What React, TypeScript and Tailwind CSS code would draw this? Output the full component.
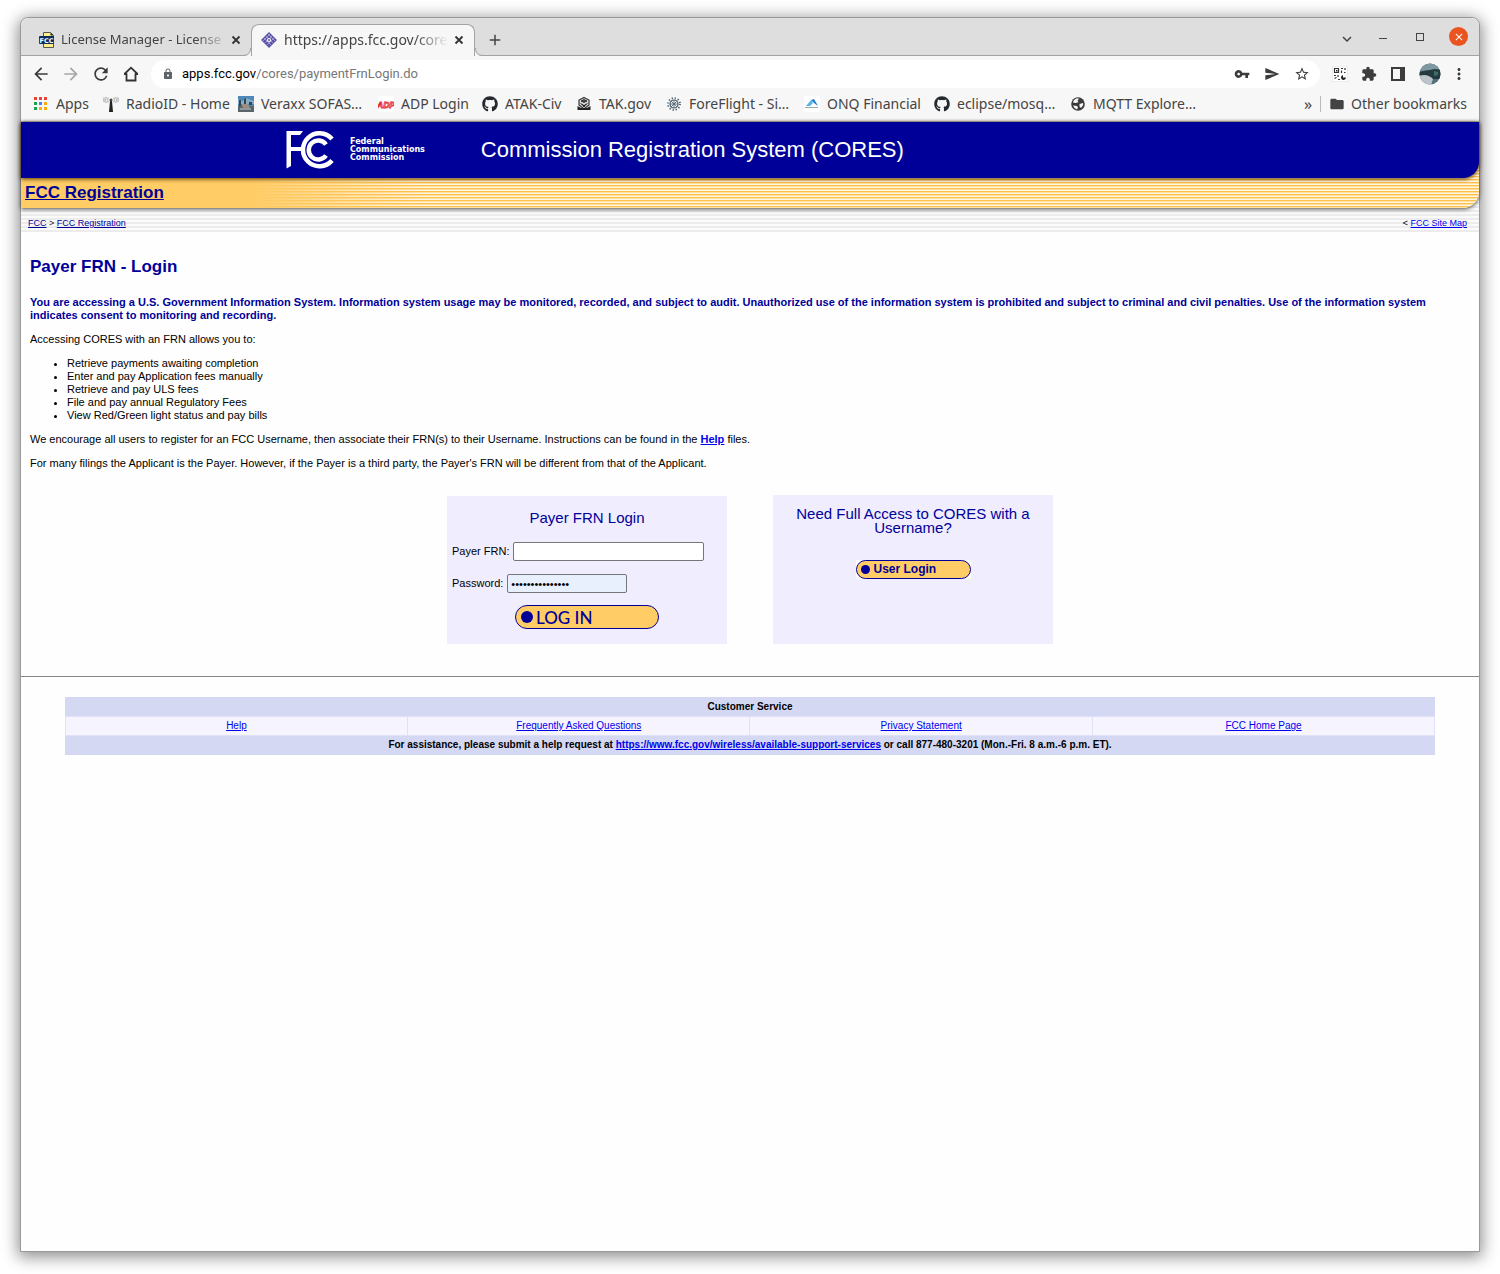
import React from 'react';
import { FaGithub } from 'react-icons/fa';
import {
    MdAdd, MdArrowBack, MdArrowForward, MdClose, MdExpandMore, MdExtension, MdFolder,
    MdLock, MdMoreVert, MdPublic, MdRefresh, MdSend, MdStarBorder, MdVpnKey
} from 'react-icons/md';

const FccPageIcon = () => (
    <svg className="size-4 shrink-0" viewBox="0 0 16 16">
        <path d="M4.500 .5h7l3 3v12h-10z" fill="#fdf08a" stroke="#555" />
        <path d="M11.500 .5v3h3z" fill="#222" />
        <rect x="0" y="4" width="15" height="8" rx="1" fill="#0b2c5c" />
        <text x="7.500" y="10.500" fontSize="6.500" fontWeight="bold" fill="#fff" textAnchor="middle" fontFamily="DejaVu Sans, sans-serif">FCC</text>
    </svg>
)

const DiamondIcon = () => (
    <svg className="size-4 shrink-0" viewBox="0 0 16 16">
        <path d="M8 0l8 8-8 8-8-8z" fill="#5a55a8" />
        <path d="M5 4l7 7M3 6l7 7M7 2l7 7M11 4l-7 7M13 6l-7 7M9 2L2 9" stroke="#c9c6ea" strokeWidth=".6" />
        <circle cx="8" cy="8" r="2" fill="#fff" />
        <circle cx="8" cy="8" r="1" fill="#5a55a8" />
    </svg>
)

const TabCloseIcon = () => (
    <svg className="size-[14px]" viewBox="0 0 14 14" stroke="#333" strokeWidth="1.800">
        <path d="M3.500 3.500l7 7M10.500 3.500l-7 7" />
    </svg>
)

const AppsIcon = () => {
    const colors: string[] = [
        "#ea4335", "#ea4335", "#ea4335", "#1e9e52", "#4285f4", "#fbab09", "#1e9e52", "#fbab09", "#fbab09"
    ]
    return (
        <svg className="size-4 shrink-0" viewBox="0 0 16 16">
            {
                colors.map((color, index) => (
                    <rect key={index} x={1 + (index % 3) * 5} y={1 + Math.floor(index / 3) * 5} width="3" height="3" fill={color} />
                ))
            }
        </svg>
    )
}

const AntennaIcon = () => (
    <svg className="size-4 shrink-0" viewBox="0 0 16 16">
        <path d="M7 5h2l1 11H6z" fill="#222" />
        <circle cx="8" cy="4" r="1.500" fill="#444" />
        <path d="M5.500 1.500q-2 2.500 0 5M3.500 1q-2.500 3 0 6M1.500 1.500q-2 2 0 4.500M10.500 1.500q2 2.500 0 5M12.500 1q2.500 3 0 6M14.500 1.500q2 2 0 4.500" fill="none" stroke="#c4c4c4" strokeWidth="1.500" />
    </svg>
)

const PhotoIcon = () => (
    <svg className="size-4 shrink-0" viewBox="0 0 16 16">
        <rect width="16" height="16" fill="#4d88b8" />
        <path d="M0 3l4 2 4-3 8 3v3H0z" fill="#86aac4" />
        <path d="M1 4h2v6H1zM6 3l2-1v6H6zM11 6h3v3h-3z" fill="#2f4654" />
        <path d="M0 10h16v6H0z" fill="#59656a" />
        <path d="M4 8h6l2 4H5z" fill="#a08d80" />
        <path d="M2 13h11" stroke="#c4ccd0" />
    </svg>
)

const AdpIcon = () => (
    <svg className="size-4 shrink-0" viewBox="0 0 16 16">
        <rect width="16" height="16" fill="#fff" />
        <text x="8" y="11.500" fontSize="8.500" fontWeight="bold" fontStyle="italic" fill="#fff" stroke="#e5202a" strokeWidth=".8" textAnchor="middle" fontFamily="Liberation Sans, sans-serif">ADP</text>
    </svg>
)

const TakIcon = () => (
    <svg className="size-4 shrink-0" viewBox="0 0 16 16">
        <path d="M8 1.500l5 2.500v5l-5 4-5-4V4z" fill="#ddd" stroke="#333" strokeWidth="1.200" />
        <path d="M5 5l3-1.500L11 5 8 6.500zM4.500 7.500l3 1.500v2M11.500 7.500l-3 1.500v2" fill="#555" stroke="#222" strokeWidth=".9" />
        <path d="M1.500 10l3.500 2h6l3.500-2v4h-13z" fill="#222" />
    </svg>
)

const ForeFlightIcon = () => (
    <svg className="size-4 shrink-0" viewBox="0 0 16 16" stroke="#4a5b68" fill="none">
        <circle cx="8" cy="8" r="6" strokeWidth="1.800" strokeDasharray="1.200 1.942" />
        <circle cx="8" cy="8" r="4" strokeWidth="1.200" />
        <path d="M8 4v8M4 8h8M5.200 5.200l5.600 5.600M10.800 5.200l-5.600 5.600" strokeWidth=".8" />
    </svg>
)

const OnqIcon = () => (
    <svg className="size-4 shrink-0" viewBox="0 0 16 16">
        <rect width="16" height="16" fill="#fff" />
        <path d="M2 10l5-6 2 3-3 3z" fill="#58b4ea" />
        <path d="M7 4l3-1 4 7-4-3z" fill="#1d7ed0" />
        <path d="M1 11.500h13" stroke="#9aa" />
    </svg>
)

const GlobeIcon = () => (
    <svg className="size-4 shrink-0" viewBox="0 0 16 16">
        <circle cx="8" cy="8" r="6.800" fill="#3c3c3c" />
        <path d="M9 2.800l-1.500 2 1 1.500-3 .7-2.500-.5q.5-3 4-4.200zM3 9.500l4 .5 1 1.500-1 2q-3-1-4-4zM9.500 8l3.500-1 .2 2-2.200 3-1.500-1.500z" fill="#f7f7f7" />
    </svg>
)

const HomeIcon = () => (
    <svg className="size-5" viewBox="0 0 20 20" fill="none" stroke="#333" strokeWidth="1.800">
        <path d="M5.500 9.500V16.500h9V9.500M3.500 10L10 3.700l6.500 6.300M3 10h3M14 10h3" />
    </svg>
)

const QrIcon = () => (
    <svg className="size-4" viewBox="0 0 16 16">
        <rect width="16" height="16" rx="1" fill="#fff" stroke="#ddd" />
        <path d="M2.500 2.500h4v4h-4zM9 2.500h2M13 2v2M9.500 4.500v2.500M12 6.500h1.500M2 9.500h2M6 9v2M2.500 12.500l2-1M6 13.500h2" fill="none" stroke="#333" strokeWidth="1.200" />
        <path d="M4 4h1.500v1.500H4zM11 9v2.500h3a2.500 2.500 0 1 1-3-2.500z" fill="#222" />
    </svg>
)

const SidePanelIcon = () => (
    <svg className="size-4" viewBox="0 0 16 16" fill="#3c3c3c">
        <path d="M1 1h14v14H1zM3 3v10h7V3z" fillRule="evenodd" />
    </svg>
)

const Avatar = () => (
    <svg className="size-[22px]" viewBox="0 0 22 22">
        <clipPath id="avatar"><circle cx="11" cy="11" r="10.500" /></clipPath>
        <g clipPath="url(#avatar)">
            <rect width="22" height="22" fill="#52707c" />
            <path d="M0 0h22v6L0 8z" fill="#7f99a3" />
            <path d="M0 9l16-3 6 1v9H10L0 13z" fill="#26393e" />
            <path d="M15 8l4 1v3l-4 1z" fill="#3b6f68" />
            <path d="M0 13q8-3 14 3l-2 6H0z" fill="#bcc5ca" />
        </g>
    </svg>
)

const FccLogo = () => (
    <svg className="h-[38px] w-[50px] shrink-0" viewBox="0 0 50 38" fill="none" stroke="#fff">
        <path d="M.5 0H17l-3 4H5v12h11v4H5v15L.5 37.500z" fill="#fff" stroke="none" />
        <path d="M46 8A16.500 16.500 0 1 0 46 29.500" strokeWidth="4.500" />
        <path d="M40 13.500A9.500 9.500 0 1 0 40 24.500" strokeWidth="4.500" />
    </svg>
)

type Bookmark = {
    label: string
    icon: React.ReactNode
    width: string
}

const bookmarks: Bookmark[] = [
    { label: "Apps", icon: <AppsIcon />, width: "w-[70px]" },
    { label: "RadioID - Home", icon: <AntennaIcon />, width: "w-[135px]" },
    { label: "Veraxx SOFAS…", icon: <PhotoIcon />, width: "w-[140px]" },
    { label: "ADP Login", icon: <AdpIcon />, width: "w-[104px]" },
    { label: "ATAK-Civ", icon: <FaGithub className="size-4 shrink-0 text-[#24292f]" />, width: "w-[94px]" },
    { label: "TAK.gov", icon: <TakIcon />, width: "w-[90px]" },
    { label: "ForeFlight - Si…", icon: <ForeFlightIcon />, width: "w-[138px]" },
    { label: "ONQ Financial", icon: <OnqIcon />, width: "w-[130px]" },
    { label: "eclipse/mosq…", icon: <FaGithub className="size-4 shrink-0 text-[#24292f]" />, width: "w-[136px]" },
    { label: "MQTT Explore…", icon: <GlobeIcon />, width: "w-[135px]" },
]

const TabStrip = () => (
    <div className="flex h-[38px] items-end rounded-t-lg border-b border-[#a3a3a3] bg-[#dedede] text-[14px] text-[#444]">
        <div className="flex h-8 w-[222px] items-center pt-px pl-[18px]">
            <FccPageIcon />
            <span className="ml-[6px] flex-1 text-[13px] whitespace-nowrap [mask-image:linear-gradient(to_right,#000_80%,transparent)]">License Manager - License</span>
            <button aria-label="Close License Manager tab"><TabCloseIcon /></button>
        </div>
        <svg className="-mb-px h-2 w-2" viewBox="0 0 8 8">
            <path d="M0 8q8 0 8-8v8z" fill="#f7f7f7" />
            <path d="M0 7.500Q7.500 7.500 7.500 0" fill="none" stroke="#a3a3a3" />
        </svg>
        <div className="-mb-px flex h-8 w-[224px] items-center rounded-t-lg border-x border-t border-[#a3a3a3] bg-[#f7f7f7] pr-2 pb-[2px] pl-[9px]">
            <DiamondIcon />
            <span className="ml-[7px] flex-1 whitespace-nowrap [mask-image:linear-gradient(to_right,#000_80%,transparent)]">https://apps.fcc.gov/core</span>
            <button aria-label="Close FCC tab" className="ml-1"><TabCloseIcon /></button>
        </div>
        <svg className="-mb-px h-2 w-2" viewBox="0 0 8 8">
            <path d="M8 8q-8 0-8-8v8z" fill="#f7f7f7" />
            <path d="M8 7.500Q.5 7.500 .5 0" fill="none" stroke="#a3a3a3" />
        </svg>
        <button aria-label="New tab" className="flex h-8 items-center pt-px pl-[3px]"><MdAdd className="size-[18px]" /></button>
        <div className="ml-auto flex h-[38px] items-center gap-[19px] pt-px pr-[11px]">
            <button aria-label="Search tabs" className="mt-1"><MdExpandMore className="size-[18px]" /></button>
            <button aria-label="Minimize" className="flex w-4 justify-center"><span className="mt-1 h-px w-2 bg-[#444]" /></button>
            <button aria-label="Maximize" className="flex w-5 justify-center"><span className="size-2 border border-[#444]" /></button>
            <button aria-label="Close window" className="flex size-[19px] items-center justify-center rounded-full bg-[#e95420] text-white"><MdClose className="size-3" /></button>
        </div>
    </div>
)

const Toolbar = () => (
    <div className="flex h-[35px] items-center bg-[#f7f7f7] pr-[15px] pl-[10px] text-[#3c3c3c]">
        <div className="flex gap-[10px]">
            <button aria-label="Back"><MdArrowBack className="size-5" /></button>
            <button aria-label="Forward" className="text-[#a5a5a5]"><MdArrowForward className="size-5" /></button>
            <button aria-label="Reload"><MdRefresh className="size-5" /></button>
            <button aria-label="Home"><HomeIcon /></button>
        </div>
        <div className="ml-[10px] flex h-7 flex-1 items-center rounded-full bg-white pr-[10px] pl-[11px]">
            <MdLock className="size-3 text-[#5f6368]" />
            <span className="ml-[8px] flex-1 font-['Roboto',sans-serif] text-[13px] text-[#777]"><span className="text-black">apps.fcc.gov</span>/cores/paymentFrnLogin.do</span>
            <div className="flex items-center gap-[14px]">
                <button aria-label="Passwords"><MdVpnKey className="size-4" /></button>
                <button aria-label="Share"><MdSend className="size-4" /></button>
                <button aria-label="Bookmark this page"><MdStarBorder className="size-4" /></button>
            </div>
        </div>
        <div className="ml-3 flex items-center gap-[13px]">
            <button aria-label="QR code"><QrIcon /></button>
            <button aria-label="Extensions"><MdExtension className="size-4" /></button>
            <button aria-label="Side panel"><SidePanelIcon /></button>
            <button aria-label="Profile"><Avatar /></button>
            <button aria-label="Menu"><MdMoreVert className="-mx-1 size-[18px]" /></button>
        </div>
    </div>
)

const BookmarkBar = () => (
    <div className="flex h-[31px] items-center border-b border-[#ccc] bg-[#f7f7f7] pr-3 pb-[5px] pl-3 text-[14px] whitespace-nowrap text-[#444]">
        {
            bookmarks.map((bookmark) => (
                <a key={bookmark.label} href="#" className={`flex shrink-0 items-center gap-[7px] ${bookmark.width}`}>
                    {bookmark.icon}
                    {bookmark.label}
                </a>
            ))
        }
        <button aria-label="More bookmarks" className="ml-auto text-[16px] leading-4">»</button>
        <div className="ml-2 h-4 w-px bg-[#bbb]" />
        <a href="#" className="ml-2 flex items-center gap-[6px]">
            <MdFolder className="size-4" />
            Other bookmarks
        </a>
    </div>
)

const PageHeader = () => (
    <header>
        <div className="bg-[repeating-linear-gradient(to_bottom,#ececec_0_2px,#fbfbfb_2px_4px)]">
            <div className="rounded-br-2xl bg-[linear-gradient(to_right,#fc6_0_230px,transparent_400px),repeating-linear-gradient(to_bottom,#ffc04a_0_1px,#ffe0a0_1px_2px,#fff6e4_2px_3px)] shadow-[0_1px_4px_#444]">
                <div className="flex h-14 items-center rounded-br-2xl bg-[#009] pb-px pl-[265px] text-white shadow-[0_1px_4px_#530]">
                    <FccLogo />
                    <div className="ml-[14px] font-['DejaVu_Sans',sans-serif] text-[8px] leading-[8px] font-bold">
                        Federal<br />Communications<br />Commission
                    </div>
                    <h1 className="ml-[56px] text-[22px]">Commission Registration System (CORES)</h1>
                </div>
                <div className="h-[30px] pl-1 text-[17px] leading-[30px] font-bold text-[#009]">
                    <a href="#" className="underline">FCC Registration</a>
                </div>
            </div>
            <nav className="flex h-6 items-center justify-between pt-[6px] pr-3 pl-[7px] text-[9px]">
                <span className="text-[#222]">
                    <a href="#" className="text-[#009] underline">FCC</a> &gt; <a href="#" className="text-[#009] underline">FCC Registration</a>
                </span>
                <span>&lt; <a href="#" className="text-[#00e] underline">FCC Site Map</a></span>
            </nav>
        </div>
    </header>
)

const PayerLogin = () => (
    <form className="h-[148px] w-[280px] bg-[#f0edff] px-[5px] pt-3" onSubmit={(e) => e.preventDefault()}>
        <h3 className="text-center text-[15px] leading-5 text-[#009]">Payer FRN Login</h3>
        <div className="mt-[14px] flex items-center gap-1">
            <label htmlFor="frn">Payer FRN:</label>
            <input id="frn" type="text" className="h-[19px] w-[191px] rounded-xs border border-[#767676] bg-white px-[3px]" />
        </div>
        <div className="mt-[13px] flex items-center gap-1">
            <label htmlFor="password">Password:</label>
            <input id="password" type="password" defaultValue="correcthorse123" className="h-[19px] w-[120px] rounded-xs border border-[#767676] bg-[#e8f0fe] px-[3px] text-black" />
        </div>
        <button className="mx-auto mt-3 flex h-[24px] w-[144px] items-center gap-[3px] rounded-full border border-[#009] bg-[#fc6] pl-[5px] font-['Lato',sans-serif] text-[17px] font-medium text-[#009]">
            <span className="size-3 rounded-full bg-[#009]" />
            LOG IN
        </button>
    </form>
)

const UserLogin = () => (
    <div className="h-[149px] w-[280px] bg-[#f0edff] px-5 pt-3">
        <h3 className="text-center text-[15px] leading-[14px] text-[#009]">Need Full Access to CORES with a Username?</h3>
        <div className="mx-auto mt-[25px] w-[115px] bg-white">
            <button className="flex h-[19px] w-full items-center gap-1 rounded-full border border-[#009] bg-[#fc6] pl-1 text-[12px] font-bold text-[#009]">
                <span className="size-[9px] rounded-full bg-[#009]" />
                User Login
            </button>
        </div>
    </div>
)

const CustomerService = () => {
    const links: string[] = [
        "Help", "Frequently Asked Questions", "Privacy Statement", "FCC Home Page"
    ]

    return (
        <table className="mx-auto mt-[20px] w-[94%] table-fixed text-center text-[10px] leading-[18px]">
            <tbody>
                <tr className="border border-[#d5d8f2] bg-[#d5d8f2]">
                    <th colSpan={4}>Customer Service</th>
                </tr>
                <tr className="bg-[#f6f4ff]">
                    {
                        links.map((link) => (
                            <td key={link} className="border border-[#dfe1f6]">
                                <a href="#" className="text-[#00e] underline">{link}</a>
                            </td>
                        ))
                    }
                </tr>
                <tr className="border border-[#d5d8f2] bg-[#d5d8f2]">
                    <th colSpan={4}>
                        For assistance, please submit a help request at <a href="#" className="text-[#00e] underline">https://www.fcc.gov/wireless/available-support-services</a> or call 877-480-3201 (Mon.-Fri. 8 a.m.-6 p.m. ET).
                    </th>
                </tr>
            </tbody>
        </table>
    )
}

const App = () => {
    const features: string[] = [
        "Retrieve payments awaiting completion",
        "Enter and pay Application fees manually",
        "Retrieve and pay ULS fees",
        "File and pay annual Regulatory Fees",
        "View Red/Green light status and pay bills"
    ]

    return (
        <div className="flex min-h-screen flex-col bg-white px-5 pt-[17px] pb-[22px]">
            <div className="flex flex-1 flex-col rounded-t-lg border border-[#999] bg-[#fefefe] shadow-[0_3px_16px_2px_rgba(0,0,0,0.45)]">
                <div className="font-['Noto_Sans',sans-serif]">
                    <TabStrip />
                    <Toolbar />
                    <BookmarkBar />
                </div>
                <div className="flex-1 font-['Liberation_Sans',Arial,sans-serif] text-[11px] leading-[13px] text-black">
                    <PageHeader />
                    <main>
                        <div className="space-y-[11px] px-[9px] pt-[25px]">
                            <h2 className="mb-[19px] text-[17px] leading-5 font-bold text-[#009]">Payer FRN - Login</h2>
                            <p className="font-bold text-[#009]">
                                You are accessing a U.S. Government Information System. Information system usage may be monitored, recorded, and subject to audit. Unauthorized use of the information system is prohibited and subject to criminal and civil penalties. Use of the information system indicates consent to monitoring and recording.
                            </p>
                            <p>Accessing CORES with an FRN allows you to:</p>
                            <ul className="list-disc pl-[37px]">
                                {
                                    features.map((feature) => (
                                        <li key={feature}>{feature}</li>
                                    ))
                                }
                            </ul>
                            <p>
                                We encourage all users to register for an FCC Username, then associate their FRN(s) to their Username. Instructions can be found in the <a href="#" className="font-bold text-[#00e] underline">Help</a> files.
                            </p>
                            <p>For many filings the Applicant is the Payer. However, if the Payer is a third party, the Payer's FRN will be different from that of the Applicant.</p>
                        </div>
                        <div className="mt-[25px] flex items-end justify-center gap-[46px]">
                            <PayerLogin />
                            <UserLogin />
                        </div>
                    </main>
                    <hr className="mt-8 border-[#888]" />
                    <CustomerService />
                </div>
            </div>
        </div>
    )
};

export default App;
